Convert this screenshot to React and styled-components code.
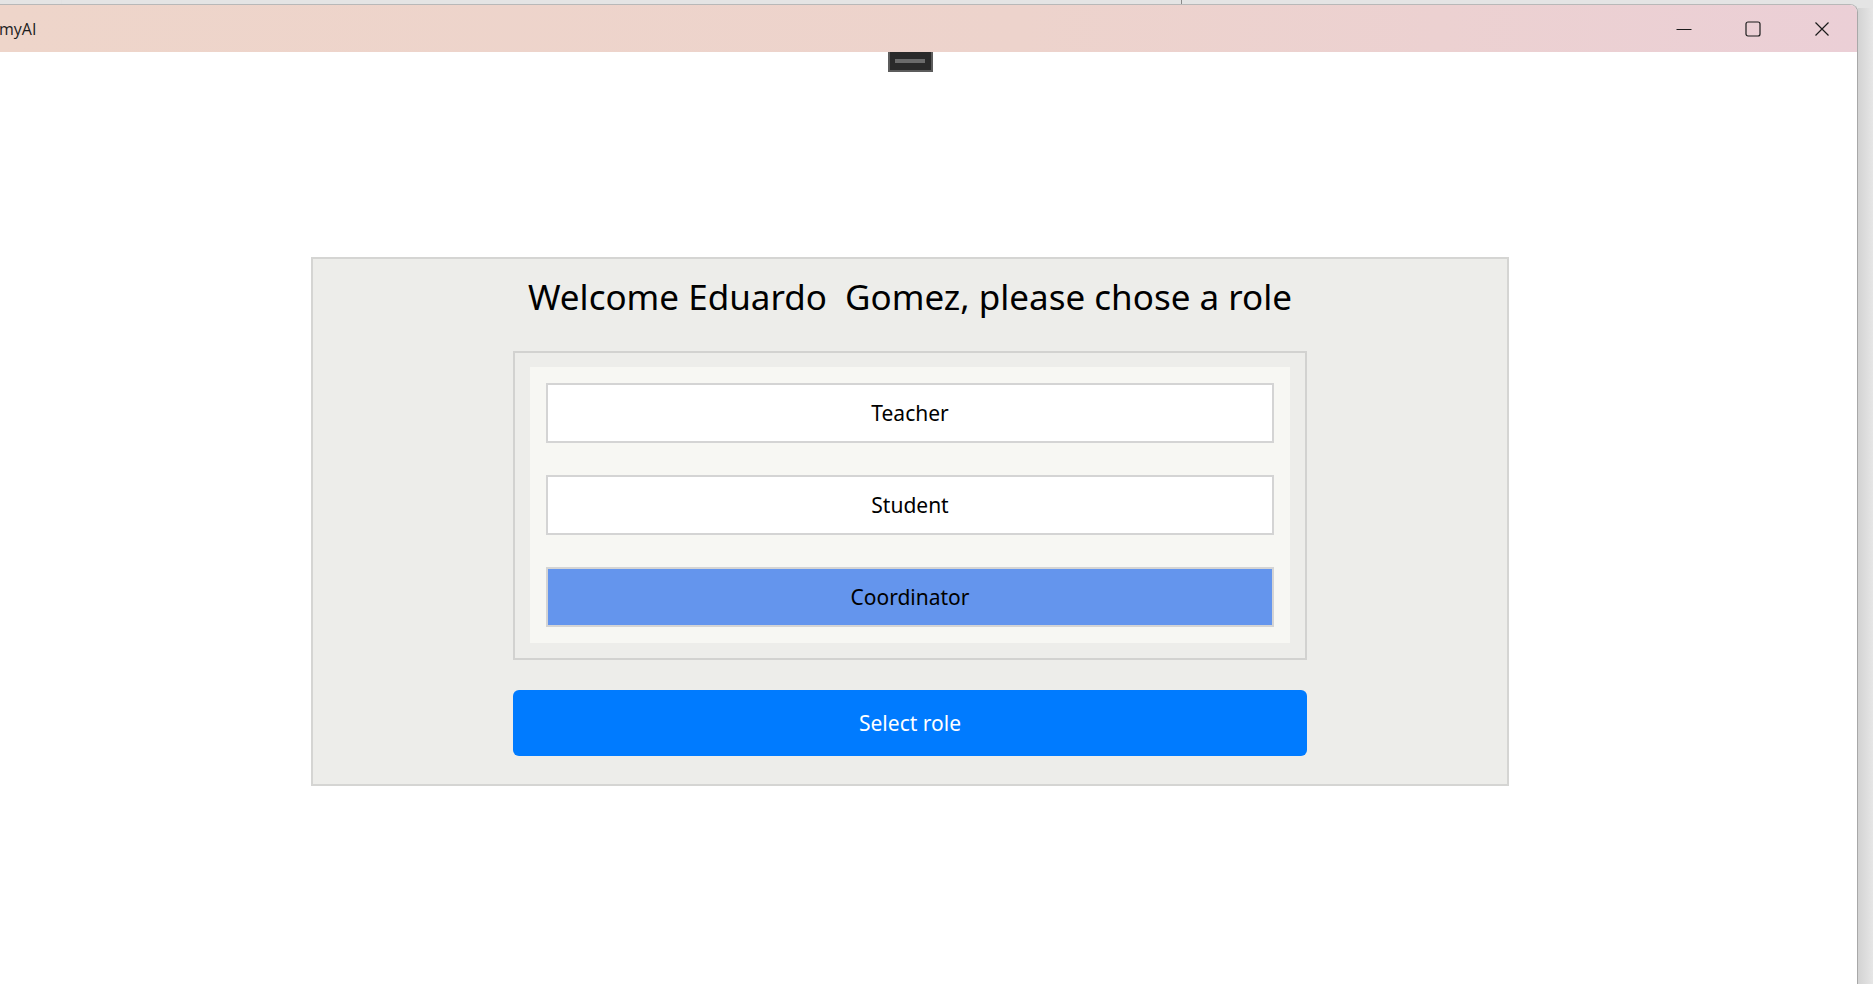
import React, { useState } from "react";
import styled, { createGlobalStyle } from "styled-components";

const GlobalStyle = createGlobalStyle`
  html, body {
    margin: 0;
    padding: 0;
    height: 100%;
    overflow: hidden;
  }
  body {
    font-family: "Noto Sans", "Open Sans", sans-serif;
    background: #e4e4e4;
  }
  #root {
    height: 100%;
  }
`;

const roles = ["Teacher", "Student", "Coordinator"];

function App() {
  const [selected, setSelected] = useState("Coordinator");

  return (
    <>
      <GlobalStyle />
      <Desktop>
        <Window>
          <TitleBar>
            <AppName>myAI</AppName>
            <Controls>
              <ControlButton aria-label="minimize">
                <svg width="16" height="16" viewBox="0 0 16 16">
                  <path d="M0.5 8.5h15" stroke="#1b1b1b" strokeWidth="1.1" fill="none" />
                </svg>
              </ControlButton>
              <ControlButton aria-label="maximize">
                <svg width="16" height="16" viewBox="0 0 16 16">
                  <rect x="1" y="1" width="14" height="14" rx="2" stroke="#1b1b1b" strokeWidth="1.2" fill="none" />
                </svg>
              </ControlButton>
              <ControlButton aria-label="close">
                <svg width="16" height="16" viewBox="0 0 16 16">
                  <path d="M1.5 1.5l13 13M14.5 1.5l-13 13" stroke="#1b1b1b" strokeWidth="1.2" fill="none" />
                </svg>
              </ControlButton>
            </Controls>
          </TitleBar>

          <Content>
            <DragHandle>
              <span />
            </DragHandle>

            <Panel>
              <Title>Welcome Eduardo  Gomez, please chose a role</Title>

              <RoleBox>
                <RoleList>
                  {roles.map((role) => (
                    <RoleItem
                      key={role}
                      $active={selected === role}
                      onClick={() => setSelected(role)}
                    >
                      {role}
                    </RoleItem>
                  ))}
                </RoleList>
              </RoleBox>

              <SelectButton>Select role</SelectButton>
            </Panel>
          </Content>
        </Window>
        <Shadow />
      </Desktop>
    </>
  );
}

export default App;

const Desktop = styled.div`
  display: flex;
  height: 100%;
  background: linear-gradient(#e2e2e2, #e2e2e2) 61px 0 / 1px 5px no-repeat,
    linear-gradient(#8a8a8a, #8a8a8a) 1181px 0 / 1px 5px no-repeat,
    #e4e4e4;
`;

const Window = styled.div`
  width: 1858px;
  margin-top: 4px;
  display: flex;
  flex-direction: column;
  background: #ffffff;
  border-top: 1px solid #b8b8b8;
  border-right: 1px solid #a8a8a8;
  border-top-right-radius: 8px;
  overflow: hidden;
  box-sizing: border-box;
`;

const Shadow = styled.div`
  flex: 1;
  background: linear-gradient(90deg, #d3d3d3, #e6e6e6);
  margin-top: 8px;
`;

const TitleBar = styled.div`
  height: 47px;
  flex-shrink: 0;
  display: flex;
  align-items: center;
  justify-content: space-between;
  background: linear-gradient(90deg, #eed5ca 0%, #edd3cc 55%, #ebcfd6 100%);
`;

const AppName = styled.span`
  font-family: "Open Sans", "Noto Sans", sans-serif;
  font-size: 16px;
  color: #1c1c1c;
  margin-left: -1px;
`;

const Controls = styled.div`
  display: flex;
  align-items: center;
  gap: 53px;
  margin-right: 27px;
`;

const ControlButton = styled.div`
  width: 16px;
  height: 16px;
  display: flex;
  align-items: center;
  justify-content: center;
`;

const Content = styled.div`
  flex: 1;
  display: flex;
  flex-direction: column;
  align-items: center;
  padding-right: 37px;
`;

const DragHandle = styled.div`
  width: 45px;
  height: 20px;
  box-sizing: border-box;
  background: #2a2a2a;
  border: 2px solid #5c5c5c;
  border-top: none;
  display: flex;
  align-items: center;
  justify-content: center;

  span {
    display: block;
    width: 30px;
    height: 4px;
    border-top: 2px solid #6a6a6a;
    border-bottom: 2px solid #6a6a6a;
    box-sizing: border-box;
    background: #444;
  }
`;

const Panel = styled.div`
  margin-top: 185px;
  width: 1198px;
  box-sizing: border-box;
  background: #ededea;
  border: 2px solid #d5d5d3;
  padding: 14px 0 28px;
  display: flex;
  flex-direction: column;
  align-items: center;
`;

const Title = styled.h1`
  margin: 0 0 31px;
  font-family: "Noto Sans", "Open Sans", sans-serif;
  font-weight: 400;
  font-size: 35px;
  line-height: 47px;
  color: #000000;
  white-space: pre;
`;

const RoleBox = styled.div`
  width: 794px;
  box-sizing: border-box;
  border: 2px solid #d2d2d0;
  padding: 14px 15px 15px;
`;

const RoleList = styled.div`
  background: #f7f7f3;
  padding: 16px;
  display: flex;
  flex-direction: column;
  gap: 32px;
`;

const RoleItem = styled.div`
  height: 60px;
  box-sizing: border-box;
  border: 2px solid #d4d4d4;
  background: ${(p) => (p.$active ? "#6495ed" : "#ffffff")};
  display: flex;
  align-items: center;
  justify-content: center;
  font-family: "Noto Sans", "Open Sans", sans-serif;
  font-size: 21px;
  color: #000000;
  cursor: pointer;
`;

const SelectButton = styled.button`
  margin-top: 30px;
  width: 794px;
  height: 66px;
  border: none;
  border-radius: 6px;
  background: #007bff;
  color: #ffffff;
  font-family: "Noto Sans", "Open Sans", sans-serif;
  font-size: 21px;
  cursor: pointer;
`;
